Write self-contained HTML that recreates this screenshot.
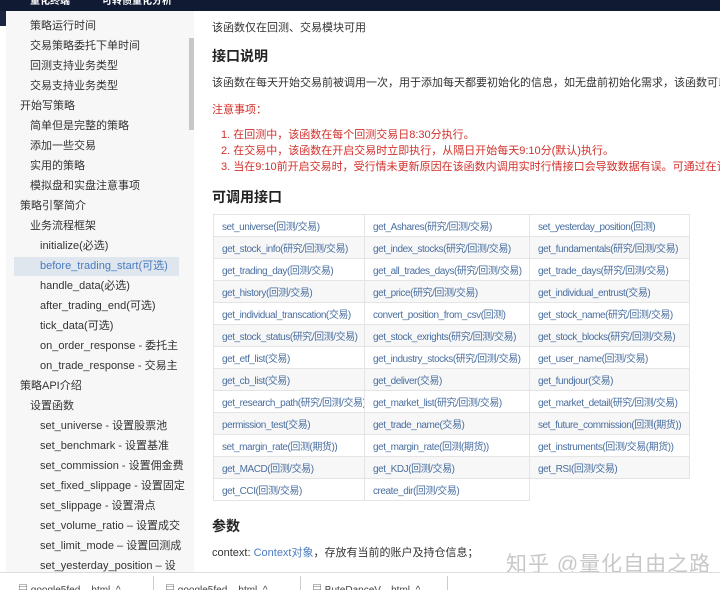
<!DOCTYPE html>
<html><head><meta charset="utf-8"><style>
*{margin:0;padding:0;box-sizing:border-box}
body{width:720px;height:590px;overflow:hidden;background:#fff;font-family:"Liberation Sans","Noto Sans CJK SC",sans-serif;font-size:11px;color:#333;position:relative}
.top{position:absolute;left:0;top:0;width:720px;height:11px;background:#111a33;color:#fff;font-size:10px;font-weight:bold;line-height:6px;overflow:hidden}
.top span{position:absolute;top:-1px}
.lstrip{position:absolute;left:0;top:11px;width:6px;height:15px;background:#1c2540}
.side{position:absolute;left:6px;top:11px;width:188px;height:561px;background:#f7f7f7;overflow:hidden}
.sb{position:absolute;left:189px;top:38px;width:5px;height:92px;background:#c8c8c8}
.si{position:absolute;white-space:nowrap;color:#333;font-size:11px;line-height:14px}
.hl{position:absolute;left:14px;top:257px;width:165px;height:19px;background:#dfe6ee}
.main{position:absolute;left:0;top:0;width:720px;height:572px;overflow:hidden}
.t{position:absolute;left:212px;white-space:nowrap;font-size:11px}
.h{font-size:14px;font-weight:bold;color:#222}
.red{color:#d2302b}
table{position:absolute;left:213px;top:214px;border-collapse:collapse;table-layout:fixed;width:476px}
td{border:1px solid #e4e4e4;height:22px;padding:0 0 0 8px;color:#4a6fa0;font-size:10px;letter-spacing:-0.45px;white-space:nowrap;overflow:hidden}
tr:nth-child(even) td{background:#f7f7f7}
td.e{border:none;background:#fff!important}
.wm{position:absolute;left:506px;top:548px;font-size:21px;color:#c8c8c8;white-space:nowrap;letter-spacing:1px}
.bar{position:absolute;left:0;top:572px;width:720px;height:18px;background:#fff;border-top:1px solid #ddd;overflow:hidden}
.tab{position:absolute;top:8px;font-size:10px;color:#444;white-space:nowrap}
.sep{position:absolute;top:3px;width:1px;height:15px;background:#ccc}
</style></head><body>
<div class="top"><span style="left:30px">量化终端</span><span style="left:102px">可转债量化分析</span></div>
<div class="lstrip"></div>
<div class="side"></div>
<div class="hl"></div>
<div class="sb"></div>
<div class="si" style="left:30px;top:19px">策略运行时间</div>
<div class="si" style="left:30px;top:39px">交易策略委托下单时间</div>
<div class="si" style="left:30px;top:59px">回测支持业务类型</div>
<div class="si" style="left:30px;top:79px">交易支持业务类型</div>
<div class="si" style="left:20px;top:99px">开始写策略</div>
<div class="si" style="left:30px;top:119px">简单但是完整的策略</div>
<div class="si" style="left:30px;top:139px">添加一些交易</div>
<div class="si" style="left:30px;top:159px">实用的策略</div>
<div class="si" style="left:30px;top:179px">模拟盘和实盘注意事项</div>
<div class="si" style="left:20px;top:199px">策略引擎简介</div>
<div class="si" style="left:30px;top:219px">业务流程框架</div>
<div class="si" style="left:40px;top:239px">initialize(必选)</div>
<div class="si" style="left:40px;top:259px;color:#4a7cc0">before_trading_start(可选)</div>
<div class="si" style="left:40px;top:279px">handle_data(必选)</div>
<div class="si" style="left:40px;top:299px">after_trading_end(可选)</div>
<div class="si" style="left:40px;top:319px">tick_data(可选)</div>
<div class="si" style="left:40px;top:339px">on_order_response - 委托主</div>
<div class="si" style="left:40px;top:359px">on_trade_response - 交易主</div>
<div class="si" style="left:20px;top:379px">策略API介绍</div>
<div class="si" style="left:30px;top:399px">设置函数</div>
<div class="si" style="left:40px;top:419px">set_universe - 设置股票池</div>
<div class="si" style="left:40px;top:439px">set_benchmark - 设置基准</div>
<div class="si" style="left:40px;top:459px">set_commission - 设置佣金费</div>
<div class="si" style="left:40px;top:479px">set_fixed_slippage - 设置固定</div>
<div class="si" style="left:40px;top:499px">set_slippage - 设置滑点</div>
<div class="si" style="left:40px;top:519px">set_volume_ratio – 设置成交</div>
<div class="si" style="left:40px;top:539px">set_limit_mode – 设置回测成</div>
<div class="si" style="left:40px;top:559px">set_yesterday_position – 设</div>

<div class="main">
<div class="t" style="top:19px">该函数仅在回测、交易模块可用</div>
<div class="t h" style="top:46px">接口说明</div>
<div class="t" style="top:74px">该函数在每天开始交易前被调用一次，用于添加每天都要初始化的信息，如无盘前初始化需求，该函数可以在策略中</div>
<div class="t red" style="top:101px">注意事项：</div>
<div class="t red" style="top:126px;left:221px">1. 在回测中，该函数在每个回测交易日8:30分执行。</div>
<div class="t red" style="top:142px;left:221px">2. 在交易中，该函数在开启交易时立即执行，从隔日开始每天9:10分(默认)执行。</div>
<div class="t red" style="top:158px;left:221px">3. 当在9:10前开启交易时，受行情未更新原因在该函数内调用实时行情接口会导致数据有误。可通过在该函数内sl</div>
<div class="t h" style="top:187px">可调用接口</div>
<table>
<colgroup><col style="width:151px"><col style="width:165px"><col style="width:160px"></colgroup>
<tr><td>set_universe(回测/交易)</td><td>get_Ashares(研究/回测/交易)</td><td>set_yesterday_position(回测)</td></tr>
<tr><td>get_stock_info(研究/回测/交易)</td><td>get_index_stocks(研究/回测/交易)</td><td>get_fundamentals(研究/回测/交易)</td></tr>
<tr><td>get_trading_day(回测/交易)</td><td>get_all_trades_days(研究/回测/交易)</td><td>get_trade_days(研究/回测/交易)</td></tr>
<tr><td>get_history(回测/交易)</td><td>get_price(研究/回测/交易)</td><td>get_individual_entrust(交易)</td></tr>
<tr><td>get_individual_transcation(交易)</td><td>convert_position_from_csv(回测)</td><td>get_stock_name(研究/回测/交易)</td></tr>
<tr><td>get_stock_status(研究/回测/交易)</td><td>get_stock_exrights(研究/回测/交易)</td><td>get_stock_blocks(研究/回测/交易)</td></tr>
<tr><td>get_etf_list(交易)</td><td>get_industry_stocks(研究/回测/交易)</td><td>get_user_name(回测/交易)</td></tr>
<tr><td>get_cb_list(交易)</td><td>get_deliver(交易)</td><td>get_fundjour(交易)</td></tr>
<tr><td>get_research_path(研究/回测/交易)</td><td>get_market_list(研究/回测/交易)</td><td>get_market_detail(研究/回测/交易)</td></tr>
<tr><td>permission_test(交易)</td><td>get_trade_name(交易)</td><td>set_future_commission(回测(期货))</td></tr>
<tr><td>set_margin_rate(回测(期货))</td><td>get_margin_rate(回测(期货))</td><td>get_instruments(回测/交易(期货))</td></tr>
<tr><td>get_MACD(回测/交易)</td><td>get_KDJ(回测/交易)</td><td>get_RSI(回测/交易)</td></tr>
<tr><td>get_CCI(回测/交易)</td><td>create_dir(回测/交易)</td><td class="e"></td></tr>
</table>
<div class="t h" style="top:516px">参数</div>
<div class="t" style="top:544px">context: <span style="color:#4a7cc0">Context对象</span>，存放有当前的账户及持仓信息；</div>
<div class="wm">知乎 @量化自由之路</div>
</div>
<div class="bar">
<div class="tab" style="left:18px">▤ google5fed....html &nbsp;^</div>
<div class="sep" style="left:153px"></div>
<div class="tab" style="left:165px">▤ google5fed....html &nbsp;^</div>
<div class="sep" style="left:300px"></div>
<div class="tab" style="left:312px">▤ ButeDanceV....html &nbsp;^</div>
<div class="sep" style="left:447px"></div>
</div>
</body></html>
